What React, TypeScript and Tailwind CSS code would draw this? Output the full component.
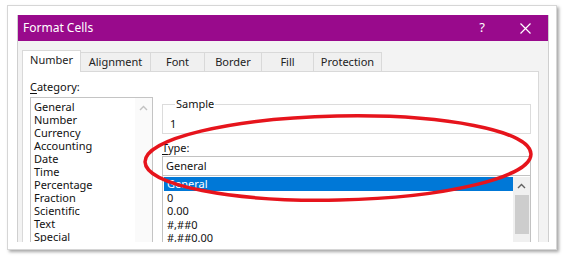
import React from "react";

const tabs = [
  { label: "Number", w: "w-[59px]", active: true },
  { label: "Alignment", w: "w-[71px]", active: false },
  { label: "Font", w: "w-[55px]", active: false },
  { label: "Border", w: "w-[58px]", active: false },
  { label: "Fill", w: "w-[53px]", active: false },
  { label: "Protection", w: "w-[69px]", active: false },
];

const categories = [
  "General",
  "Number",
  "Currency",
  "Accounting",
  "Date",
  "Time",
  "Percentage",
  "Fraction",
  "Scientific",
  "Text",
  "Special",
];

const types = ["General", "0", "0.00", "#,##0", "#,##0.00"];

const Chevron = ({ color }: { color: string }) => (
  <svg width="9" height="6" viewBox="0 0 9 6">
    <path d="M1 5 L4.5 1.5 L8 5" fill="none" stroke={color} strokeWidth="1.4" />
  </svg>
);

const App = () => {
  return (
    <div className="relative w-[565px] h-[261px] bg-white overflow-hidden font-['Noto_Sans',sans-serif] text-[11px] text-[#111]">
      <div className="pt-[5px] pl-[7px]">
        <div className="w-[550px] h-[245px] border border-[#d6d6d6] bg-white pt-[9px] pl-[9px] shadow-[2px_2px_3px_rgba(0,0,0,0.35)]">
          <div className="w-[532px] h-[227px] overflow-hidden bg-[#f3f3f3] border-x border-[#cfcfcf]">
            {/* title bar */}
            <div className="h-[26px] bg-[#990a8c] flex items-center text-white">
              <span className="pl-[5px] text-[12px] flex-1">Format Cells</span>
              <span className="w-[40px] text-center text-[13px]">?</span>
              <span className="w-[46px] flex justify-center">
                <svg width="11" height="11" viewBox="0 0 11 11">
                  <path d="M0.5 0.5 L10.5 10.5 M10.5 0.5 L0.5 10.5" stroke="white" strokeWidth="1.2" />
                </svg>
              </span>
            </div>

            {/* body */}
            <div className="pl-[4px] pt-[9px] pr-[9px]">
              <div className="flex items-end h-[21px]">
                {tabs.map((t, i) =>
                  t.active ? (
                    <div
                      key={t.label}
                      className={`${t.w} h-[22px] -mb-px relative z-10 bg-white border-x border-t border-[#d9d9d9] flex items-center justify-center pb-[2px] text-[#222]`}
                    >
                      {t.label}
                    </div>
                  ) : (
                    <div
                      key={t.label}
                      className={`${t.w} h-[19px] ${i > 0 ? "-ml-px" : ""} bg-[#f0f0f0] border-x border-t border-[#d9d9d9] flex items-center justify-center text-[#222]`}
                    >
                      {t.label}
                    </div>
                  )
                )}
              </div>

              <div className="h-[180px] bg-white border border-[#d9d9d9] flex pl-[7px] gap-[9px]">
                {/* left column */}
                <div className="w-[123px] pt-[8px] flex flex-col">
                  <div className="h-[14px] leading-[14px]">
                    <span className="underline underline-offset-2">C</span>ategory:
                  </div>
                  <div className="mt-[3px] h-[160px] border border-[#c4c4c4] flex">
                    <div className="flex-1 pl-[3px] pt-[2px]">
                      {categories.map((c) => (
                        <div key={c} className="h-[13px] leading-[13px] whitespace-nowrap">
                          {c}
                        </div>
                      ))}
                    </div>
                    <div className="w-[17px] bg-[#fafafa] flex flex-col">
                      <div className="h-[19px] flex items-center justify-center">
                        <Chevron color="#c2c2c2" />
                      </div>
                    </div>
                  </div>
                </div>

                {/* right column */}
                <div className="w-[369px] flex flex-col">
                  <fieldset className="mt-[25px] border border-[#dcdcdc] pl-[7px] pb-[3px]">
                    <legend className="ml-[5px] px-[1px] h-[14px] leading-[14px]">Sample</legend>
                    <div className="mt-[6px] h-[13px] leading-[13px]">1</div>
                  </fieldset>

                  <div className="mt-[7px] h-[14px] leading-[14px]">
                    <span className="underline underline-offset-2">T</span>ype:
                  </div>
                  <div className="mt-[1px] h-[21px] border border-[#c2c2c2] flex items-center pl-[3px]">
                    General
                  </div>
                  <div className="h-[80px] border-x border-[#c2c2c2] flex pt-[1px] pl-px">
                    <div className="flex-1 overflow-hidden">
                      {types.map((t, i) => (
                        <div
                          key={t}
                          className={`${i === 0 ? "h-[14px] bg-[#0078d7] text-white" : "h-[13.5px]"} leading-[13.5px] pl-[3px] whitespace-nowrap`}
                        >
                          {t}
                        </div>
                      ))}
                    </div>
                    <div className="w-[17px] bg-[#f0f0f0] flex flex-col items-center">
                      <div className="h-[18px] flex items-center justify-center">
                        <Chevron color="#606060" />
                      </div>
                      <div className="w-[14px] h-[39px] bg-[#cdcdcd]" />
                    </div>
                  </div>
                </div>
              </div>
            </div>
          </div>
        </div>
      </div>

      {/* red annotation ellipse */}
      <svg className="absolute left-0 top-0 pointer-events-none" width="565" height="261" viewBox="0 0 565 261">
        <ellipse
          cx="338"
          cy="158"
          rx="193"
          ry="42"
          transform="rotate(-1.2 338 158)"
          fill="none"
          stroke="#e6141c"
          strokeWidth="3.5"
        />
      </svg>
    </div>
  );
};

export default App;
